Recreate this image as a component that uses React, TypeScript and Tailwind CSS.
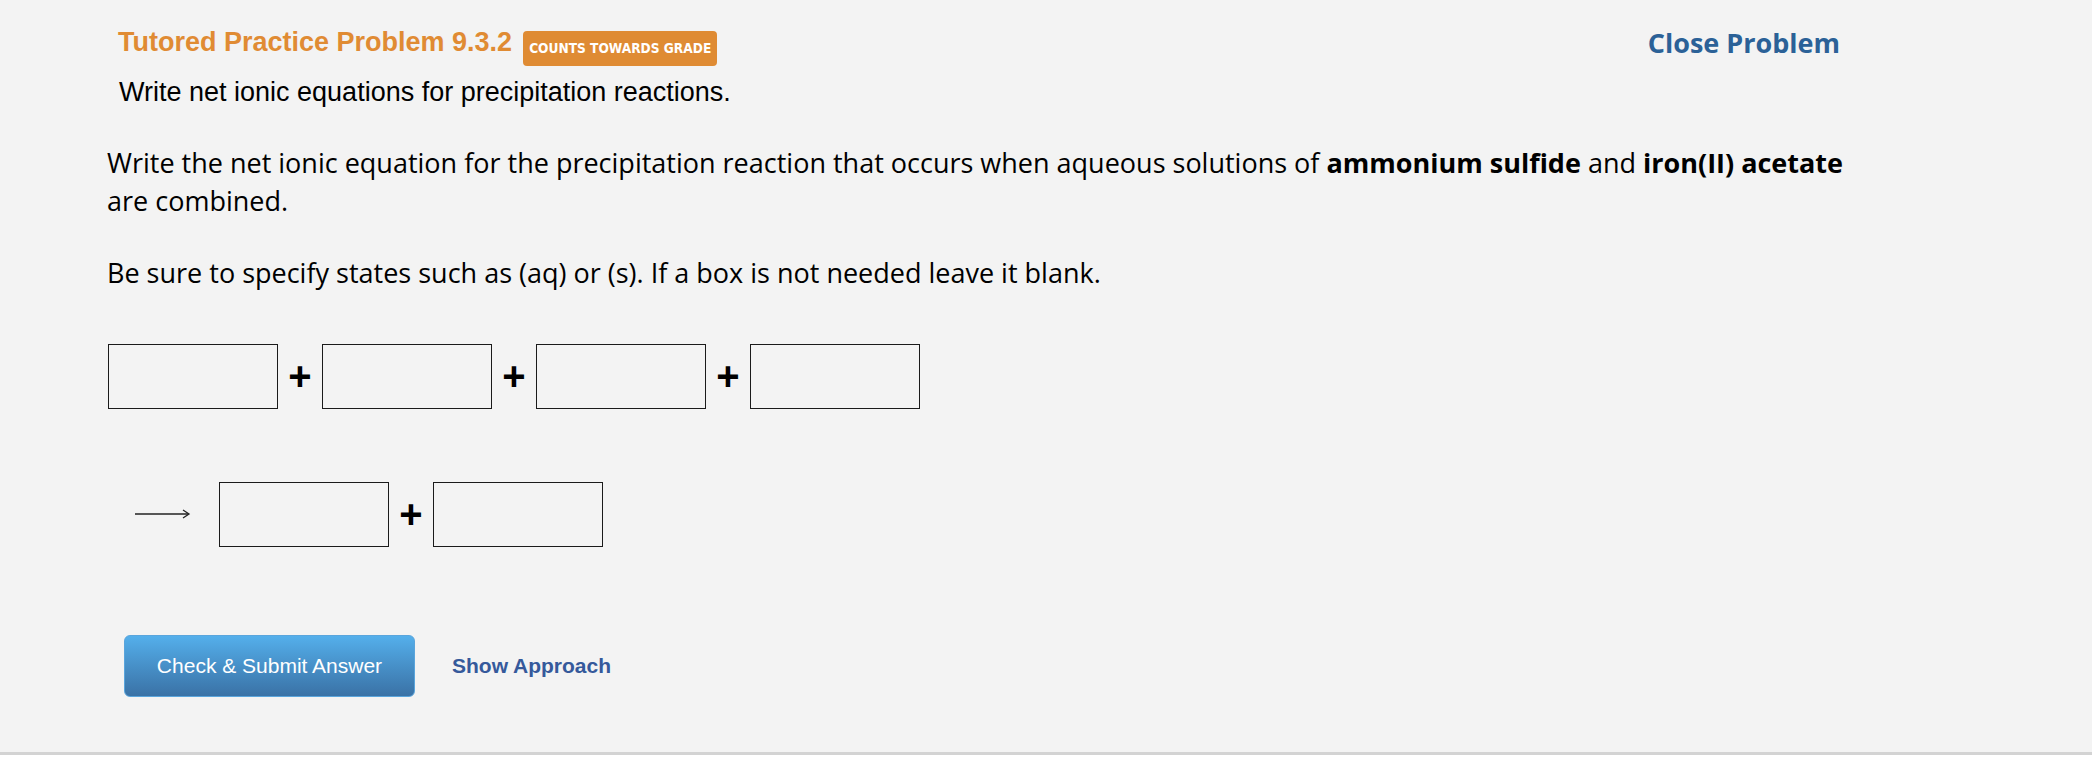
import React from "react";

function AnswerBox() {
  return <div className="w-[170px] h-[65px] border border-[#1a1a1a] shrink-0" />;
}

function Plus() {
  return (
    <div className="w-[44px] flex justify-center items-center shrink-0">
      <span className="font-['Liberation_Sans',Arial,sans-serif] font-bold text-[40px] leading-none text-black">+</span>
    </div>
  );
}

export default function App() {
  return (
    <div className="min-h-[782px] bg-white">
      <div className="bg-[#f3f3f3] border-b-[3px] border-[#d3d3d3] pl-[107px] pt-[27px] pb-[55px]">
        <div className="w-[1740px]">
          {/* header */}
          <div className="flex justify-between items-start pl-[11px] pr-[7px] h-[31px]">
            <div className="flex items-start">
              <h1 className="font-['Liberation_Sans',Arial,sans-serif] font-bold text-[27px] leading-[31px] text-[#e08b33]">
                Tutored Practice Problem 9.3.2
              </h1>
              <span className="ml-[11px] mt-[4px] h-[35px] px-[6px] flex items-center rounded-[4px] bg-[#df8b33] text-white font-['DejaVu_Sans_Condensed','Liberation_Sans',Arial,sans-serif] font-bold text-[13.6px]">
                COUNTS TOWARDS GRADE
              </span>
            </div>
            <a href="#" className="font-['Open_Sans',sans-serif] font-bold text-[27px] leading-[31px] text-[#2b6197]">
              Close Problem
            </a>
          </div>
          <p className="pl-[12px] mt-[19px] font-['Liberation_Sans',Arial,sans-serif] text-[27px] leading-[30px] text-black">
            Write net ionic equations for precipitation reactions.
          </p>

          {/* question */}
          <div className="mt-[37px] font-['Open_Sans',sans-serif] text-[27px] leading-[37.5px] text-black">
            <p>
              Write the net ionic equation for the precipitation reaction that occurs when aqueous solutions of{" "}
              <b>ammonium sulfide</b> and <b>iron(II) acetate</b> are combined.
            </p>
            <p className="mt-[35px]">
              Be sure to specify states such as (aq) or (s). If a box is not needed leave it blank.
            </p>
          </div>

          {/* reactants */}
          <div className="mt-[52px] flex items-center pl-[1px]">
            <AnswerBox />
            <Plus />
            <AnswerBox />
            <Plus />
            <AnswerBox />
            <Plus />
            <AnswerBox />
          </div>

          {/* products */}
          <div className="mt-[73px] flex items-center pl-[28px]">
            <svg width="56" height="14" viewBox="0 0 56 14" className="shrink-0">
              <line x1="0" y1="7" x2="53" y2="7" stroke="#222" strokeWidth="1.6" />
              <path d="M48 3 L54 7 L48 11" fill="none" stroke="#222" strokeWidth="1.3" />
            </svg>
            <div className="w-[28px]" />
            <AnswerBox />
            <Plus />
            <AnswerBox />
          </div>

          {/* actions */}
          <div className="mt-[88px] flex items-center pl-[17px]">
            <button className="w-[291px] h-[62px] rounded-[6px] border border-[#5aa5dc] bg-linear-to-b from-[#54afeb] to-[#3a72a6] text-white font-['Liberation_Sans',Arial,sans-serif] text-[21px]">
              Check &amp; Submit Answer
            </button>
            <a href="#" className="ml-[37px] font-['Liberation_Sans',Arial,sans-serif] font-bold text-[21px] text-[#35599b]">
              Show Approach
            </a>
          </div>
        </div>
      </div>
    </div>
  );
}
